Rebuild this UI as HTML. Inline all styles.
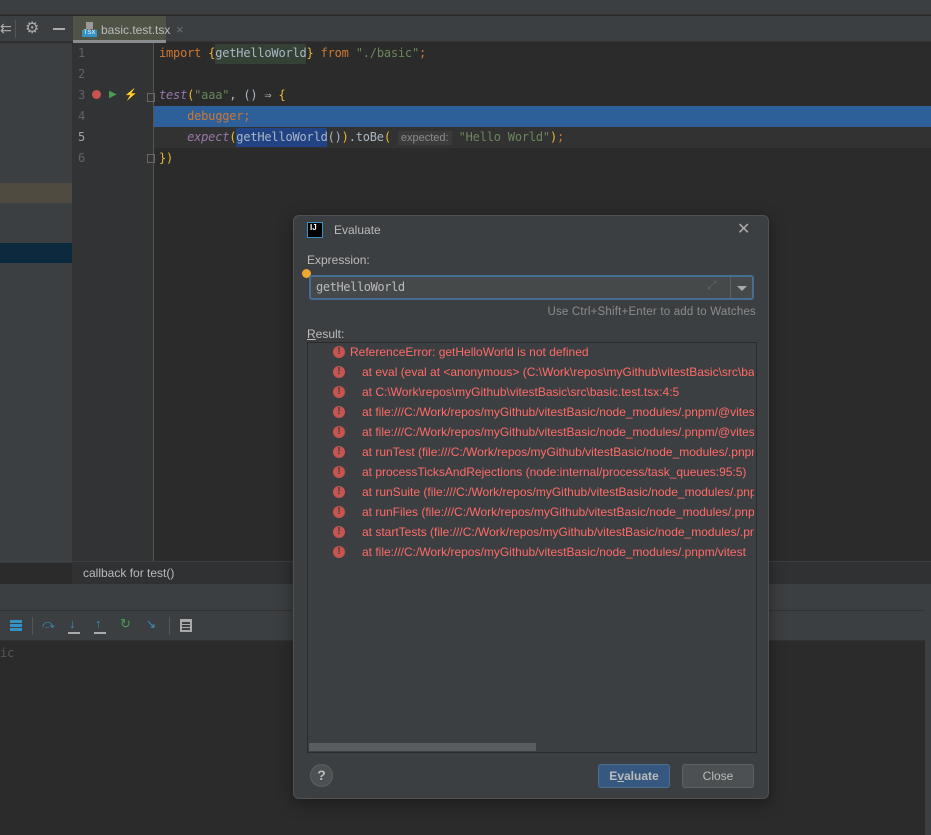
<!DOCTYPE html>
<html><head><meta charset="utf-8"><style>
*{margin:0;padding:0;box-sizing:border-box}
body{width:931px;height:835px;background:#2b2b2b;position:relative;overflow:hidden;font-family:"Liberation Sans",sans-serif;font-size:12px;color:#bbb}
.a{position:absolute}
.mono{font-family:"DejaVu Sans Mono","Liberation Mono",monospace;font-size:12px;letter-spacing:-0.2px}
.ln{position:absolute;left:72px;width:40px;text-align:left;padding-left:6px;color:#606366;letter-spacing:0}
.code{position:absolute;left:159px;white-space:pre;color:#a9b7c6}
.kw{color:#cc7832}.str{color:#6a8759}.fn{color:#9876aa;font-style:italic}.par{color:#e8ba36}
.err{position:absolute;left:333px;width:12px;height:12px;border-radius:50%;background:#c75450;color:#3c3f41;font-weight:bold;font-size:10px;text-align:center;line-height:12px}
.et{position:absolute;left:362px;color:#ff6b68;white-space:nowrap;font-size:12px}
</style></head><body>
<div class="a" style="left:0;top:0;width:931px;height:15px;background:#3c3f41;border-bottom:1px solid #323232"></div>
<div class="a" style="left:0;top:16px;width:931px;height:26px;background:#3c3f41;border-bottom:1px solid #323232"></div>
<div class="a" style="left:0;top:20px;color:#aaa;font-size:14px">⇇</div>
<div class="a" style="left:15px;top:20px;width:1px;height:18px;background:#555"></div>
<div class="a" style="left:25px;top:18px;color:#aaa;font-size:16px">⚙</div>
<div class="a" style="left:53px;top:28px;width:12px;height:2px;background:#aaa"></div>
<div class="a" style="left:73px;top:16px;width:93px;height:26px;background:#4e5346"></div>
<div class="a" style="left:73px;top:40px;width:93px;height:3px;background:#8a8d8f"></div>
<div class="a" style="left:82px;top:30px;width:15px;height:7px;background:#3592c4;color:#fff;font-size:6px;line-height:7px;text-align:center">TSX</div>
<div class="a" style="left:86px;top:22px;width:7px;height:7px;background:#9a9a9a"></div>
<div class="a" style="left:101px;top:23px;color:#bbb">basic.test.tsx</div>
<div class="a" style="left:176px;top:22px;color:#6e6e6e;font-size:13px">×</div>
<div class="a" style="left:0;top:43px;width:72px;height:520px;background:#3c3f41"></div>
<div class="a" style="left:0;top:183px;width:72px;height:20px;background:#4f4b41"></div>
<div class="a" style="left:0;top:243px;width:72px;height:20px;background:#0d293e"></div>
<div class="a" style="left:72px;top:43px;width:81px;height:519px;background:#313335"></div>
<div class="a" style="left:153px;top:43px;width:1px;height:519px;background:#555"></div>
<div class="a" style="left:154px;top:106px;width:777px;height:21px;background:#2d5f99"></div>
<div class="a" style="left:154px;top:127px;width:777px;height:21px;background:#323232"></div>
<div class="a" style="left:215px;top:44px;width:91px;height:20px;background:#344134"></div>
<div class="a" style="left:236px;top:128px;width:91px;height:19px;background:#214283"></div>
<div class="mono">
<div class="ln" style="top:46px">1</div><div class="ln" style="top:67px">2</div><div class="ln" style="top:88px">3</div><div class="ln" style="top:109px">4</div><div class="ln" style="top:130px;color:#a4a3a3">5</div><div class="ln" style="top:151px">6</div>
<div class="code" style="top:46px"><span class="kw">import</span> <span class="par">{</span>getHelloWorld<span class="par">}</span> <span class="kw">from</span> <span class="str">"./basic"</span><span class="kw">;</span></div>
<div class="code" style="top:88px"><span class="fn">test</span><span class="par">(</span><span class="str">"aaa"</span>, () ⇒ <span class="par">{</span></div>
<div class="code" style="top:109px">    <span class="kw">debugger;</span></div>
<div class="code" style="top:130px">    <span class="fn">expect</span><span class="par">(</span>getHelloWorld()<span class="par">)</span>.toBe<span class="par">(</span> <span style="background:#3b3b3b;color:#8c8c8c;font-family:'Liberation Sans';font-size:11px;letter-spacing:0;padding:1px 3px">expected:</span> <span class="str">"Hello World"</span><span class="par">)</span><span class="kw">;</span></div>
<div class="code" style="top:151px"><span class="par">})</span></div>
</div>
<div class="a" style="left:92px;top:90px;width:9px;height:9px;border-radius:50%;background:#c75450"></div>
<div class="a" style="left:109px;top:89px;color:#499c54;font-size:10px">▶</div>
<div class="a" style="left:124px;top:88px;color:#e8ba36;font-size:11px">⚡</div>
<div class="a" style="left:147px;top:93px;width:8px;height:9px;border:1px solid #666"></div>
<div class="a" style="left:147px;top:154px;width:8px;height:9px;border:1px solid #666"></div>
<div class="a" style="left:72px;top:561px;width:859px;height:1px;background:#3c3f41"></div>
<div class="a" style="left:72px;top:562px;width:859px;height:22px;background:#2f3133"></div>
<div class="a" style="left:83px;top:566px;color:#bbb">callback for test()</div>
<div class="a" style="left:0;top:584px;width:931px;height:27px;background:#3c3f41;border-bottom:1px solid #323232"></div>
<div class="a" style="left:0;top:611px;width:931px;height:30px;background:#3c3f41;border-bottom:1px solid #323232"></div>
<div class="a" style="left:10px;top:620px;width:12px;height:3px;background:#3592c4;box-shadow:0 4px 0 #3592c4,0 8px 0 #3592c4"></div>
<div class="a" style="left:32px;top:617px;width:1px;height:18px;background:#555"></div>
<div class="a" style="left:42px;top:617px;color:#3592c4;font-size:12px">⤼</div>
<div class="a" style="left:69px;top:616px;color:#3592c4;font-size:13px;font-weight:bold">↓</div>
<div class="a" style="left:95px;top:616px;color:#3592c4;font-size:13px;font-weight:bold">↑</div>
<div class="a" style="left:68px;top:632px;width:12px;height:2px;background:#aaa"></div>
<div class="a" style="left:94px;top:632px;width:12px;height:2px;background:#aaa"></div>
<div class="a" style="left:120px;top:616px;color:#499c54;font-size:13px">↻</div>
<div class="a" style="left:146px;top:617px;color:#3592c4;font-size:12px">↘</div>
<div class="a" style="left:169px;top:617px;width:1px;height:18px;background:#555"></div>
<div class="a" style="left:180px;top:619px;width:12px;height:13px;border:2px solid #aaa;background:repeating-linear-gradient(#aaa 0 1px,transparent 1px 3px)"></div>
<div class="a mono" style="left:0;top:646px;color:#555">ic</div>
<div class="a" style="left:925px;top:584px;width:6px;height:251px;background:#3c3f41"></div>
<div class="a" style="left:293px;top:215px;width:476px;height:584px;background:#3c3f41;border:1px solid #515151;border-radius:6px;box-shadow:0 4px 16px rgba(0,0,0,.4)">
 <div class="a" style="left:13px;top:6px;width:16px;height:16px;background:#000;border:1px solid #3592c4;color:#fff;font-size:8px;font-weight:bold;padding-left:2px;line-height:10px">IJ</div>
 <div class="a" style="left:40px;top:7px;color:#bbb">Evaluate</div>
 <div class="a" style="left:443px;top:3px;color:#aaa;font-size:16px">✕</div>
 <div class="a" style="left:13px;top:37px;color:#bbb">Expression:</div>
 <div class="a" style="left:8px;top:53px;width:9px;height:9px;border-radius:50%;background:#f0a732"></div>
 <div class="a" style="left:15px;top:59px;width:445px;height:25px;border:2px solid #466d94;border-radius:3px;background:#45494a"></div>
 <div class="a mono" style="left:22px;top:64px;color:#bbb;font-size:12px;letter-spacing:-0.4px">getHelloWorld</div>
 <div class="a" style="left:413px;top:62px;color:#666;font-size:12px">⤢</div>
 <div class="a" style="left:436px;top:61px;width:1px;height:21px;background:#5e6060"></div>
 <div class="a" style="left:443px;top:70px;width:0;height:0;border-left:5px solid transparent;border-right:5px solid transparent;border-top:5px solid #aaa"></div>
 <div class="a" style="right:12px;top:90px;color:#8c8c8c;font-size:11.5px;letter-spacing:0.2px">Use Ctrl+Shift+Enter to add to Watches</div>
 <div class="a" style="left:13px;top:111px;color:#bbb"><u>R</u>esult:</div>
 <div class="a" style="left:13px;top:126px;width:450px;height:411px;border:1px solid #2b2b2b;background:#3c3f41"></div>
 <div class="a" style="left:15px;top:527px;width:227px;height:8px;background:#5a5d5f"></div>
 <div class="a" style="left:16px;top:548px;width:23px;height:23px;border-radius:50%;background:#4c5052;border:1px solid #5e6060;color:#bbb;text-align:center;font-weight:bold;font-size:14px;line-height:21px">?</div>
 <div class="a" style="left:304px;top:548px;width:72px;height:24px;background:#365880;border:1px solid #4c708c;border-radius:3px;color:#bbb;text-align:center;line-height:22px;font-weight:bold">E<u>v</u>aluate</div>
 <div class="a" style="left:388px;top:548px;width:72px;height:24px;background:#4c5052;border:1px solid #5e6060;border-radius:3px;color:#bbb;text-align:center;line-height:22px">Close</div>
</div>
<div class="a" style="left:307px;top:342px;width:447px;height:222px;overflow:hidden">
 <div style="position:relative;left:-307px;top:-342px">
 <div class="err" style="top:346px">!</div><div class="et" style="left:350px;top:345px">ReferenceError: getHelloWorld is not defined</div>
 <div class="err" style="top:366px">!</div><div class="et" style="top:365px">at eval (eval at &lt;anonymous&gt; (C:\Work\repos\myGithub\vitestBasic\src\basic.test.tsx</div>
 <div class="err" style="top:386px">!</div><div class="et" style="top:385px">at C:\Work\repos\myGithub\vitestBasic\src\basic.test.tsx:4:5</div>
 <div class="err" style="top:406px">!</div><div class="et" style="top:405px">at file:///C:/Work/repos/myGithub/vitestBasic/node_modules/.pnpm/@vitest</div>
 <div class="err" style="top:426px">!</div><div class="et" style="top:425px">at file:///C:/Work/repos/myGithub/vitestBasic/node_modules/.pnpm/@vitest</div>
 <div class="err" style="top:446px">!</div><div class="et" style="top:445px">at runTest (file:///C:/Work/repos/myGithub/vitestBasic/node_modules/.pnpm</div>
 <div class="err" style="top:466px">!</div><div class="et" style="top:465px">at processTicksAndRejections (node:internal/process/task_queues:95:5)</div>
 <div class="err" style="top:486px">!</div><div class="et" style="top:485px">at runSuite (file:///C:/Work/repos/myGithub/vitestBasic/node_modules/.pnpm</div>
 <div class="err" style="top:506px">!</div><div class="et" style="top:505px">at runFiles (file:///C:/Work/repos/myGithub/vitestBasic/node_modules/.pnpm</div>
 <div class="err" style="top:526px">!</div><div class="et" style="top:525px">at startTests (file:///C:/Work/repos/myGithub/vitestBasic/node_modules/.pnpm</div>
 <div class="err" style="top:546px">!</div><div class="et" style="top:545px">at file:///C:/Work/repos/myGithub/vitestBasic/node_modules/.pnpm/vitest</div>
 </div>
</div>
</body></html>
